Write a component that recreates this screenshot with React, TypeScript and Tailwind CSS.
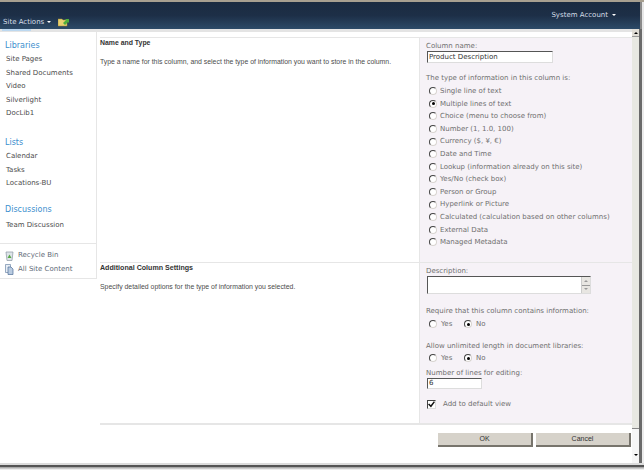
const sans = "font-['DejaVu_Sans',sans-serif]";

function Radio({ on = false }: { on?: boolean }) {
  return (
    <span className="flex h-[8px] w-[8px] shrink-0 items-center justify-center rounded-full border border-b-[#d8d4d0] border-l-[#444] border-r-[#d8d4d0] border-t-[#444] bg-white">
      {on && <span className="h-[3px] w-[3px] rounded-full bg-black" />}
    </span>
  );
}

function Opt({ label, on = false }: { label: string; on?: boolean }) {
  return (
    <div className="flex h-[12.6px] items-center gap-[3px] pl-[3px]">
      <Radio on={on} />
      <span>{label}</span>
    </div>
  );
}

function YesNo() {
  return (
    <div className="flex h-[12px] items-center pl-[3px]">
      <Radio />
      <span className="ml-[4px] w-[23px]">Yes</span>
      <Radio on />
      <span className="ml-[4px]">No</span>
    </div>
  );
}

function NavLink({ label }: { label: string }) {
  return <div className="h-[13.6px] pl-[6px] leading-[13.6px] text-[#4c4c4c]">{label}</div>;
}

function NavHead({ label }: { label: string }) {
  return <div className="pl-[5px] text-[8px] leading-[14px] text-[#3c8fce]">{label}</div>;
}

const types = [
  "Single line of text",
  "Multiple lines of text",
  "Choice (menu to choose from)",
  "Number (1, 1.0, 100)",
  "Currency ($, ¥, €)",
  "Date and Time",
  "Lookup (information already on this site)",
  "Yes/No (check box)",
  "Person or Group",
  "Hyperlink or Picture",
  "Calculated (calculation based on other columns)",
  "External Data",
  "Managed Metadata",
];

export default function App() {
  return (
    <div className={`flex h-[470px] w-[644px] flex-col overflow-hidden bg-white text-[7px] text-[#6f6f6f] ${sans}`}>
      <div className="h-[2px] bg-[#a8a090]" />
      <div className="flex h-[27px]">
        <header className="flex flex-1 items-end justify-between bg-gradient-to-b from-[#1b2b40] via-[#1d2f47] to-[#2c4a68] pb-[2px]">
          <div className="flex items-center text-[#d6dfe8]">
            <span className="ml-[3px]">Site Actions</span>
            <span className="ml-[3px] h-0 w-0 border-x-[2px] border-t-[2px] border-x-transparent border-t-white" />
            <svg className="ml-[7px]" width="11" height="10" viewBox="0 0 11 10">
              <path d="M0 2h4l1 1h4v6H0z" fill="#e8d070" stroke="#a08a30" strokeWidth="0.5" />
              <path d="M5 6l3-3-1-1h4v4l-1-1-3 3z" fill="#4fae3c" />
            </svg>
          </div>
          <div className="mb-[7px] mr-[24px] flex items-center text-[#d6dfe8]">
            <span>System Account</span>
            <span className="ml-[4px] h-0 w-0 border-x-[2px] border-t-[2px] border-x-transparent border-t-white" />
          </div>
        </header>
        <div className="w-[2px] bg-[#8a8a8a]" />
        <div className="w-[2px] bg-[#e8e8e8]" />
      </div>

      <div className="flex min-h-0 flex-1">
        <div className="flex min-w-0 flex-1 flex-col">
          <div className="h-[3px] bg-[#e4e4e4]">
            <div className="ml-[2px] h-[2px] w-[29px] bg-[#bcd8f0]" />
          </div>
          <div className="flex min-h-0 flex-1">
            <aside className="flex w-[97px] shrink-0 flex-col">
              <div className="border-r border-[#e6e6e6] pb-[11px] pt-[7px]">
                <NavHead label="Libraries" />
                <div>
                  <NavLink label="Site Pages" />
                  <NavLink label="Shared Documents" />
                  <NavLink label="Video" />
                  <NavLink label="Silverlight" />
                  <NavLink label="DocLib1" />
                </div>
                <div className="mt-[15px]"><NavHead label="Lists" /></div>
                <div>
                  <NavLink label="Calendar" />
                  <NavLink label="Tasks" />
                  <NavLink label="Locations-BU" />
                </div>
                <div className="mt-[12px]"><NavHead label="Discussions" /></div>
                <div className="mt-[2px]">
                  <NavLink label="Team Discussion" />
                </div>
              </div>
              <div className="border-b border-r border-t border-[#e6e6e6] pb-[2px] pt-[4px] text-[#5f6b78]">
                <div className="flex h-[14px] items-center gap-[4px] pl-[5px]">
                  <svg width="9" height="11" viewBox="0 0 9 11">
                    <path d="M1 2h7l-1 8.5H2z" fill="#dfe5ea" stroke="#8a97a3" strokeWidth="0.7" />
                    <path d="M4.5 4.5l2 3.5h-4z" fill="#5aa84a" />
                  </svg>
                  <span>Recycle Bin</span>
                </div>
                <div className="flex h-[14px] items-center gap-[4px] pl-[5px]">
                  <svg width="9" height="11" viewBox="0 0 9 11">
                    <path d="M0.5 0.5h5v8h-5z" fill="#e8eef5" stroke="#6f88a8" strokeWidth="0.7" />
                    <path d="M3 3h3l2 2v5.5H3z" fill="#b9cbe0" stroke="#4f6f98" strokeWidth="0.7" />
                  </svg>
                  <span>All Site Content</span>
                </div>
              </div>
            </aside>

            <main className="flex min-w-0 flex-1 flex-col pl-[3px] pt-[5px]">
              <section className="flex h-[225px] border-t border-[#e6e6e6]">
                <div className="w-[320px] shrink-0 border-r border-[#e6e6e6] font-['Liberation_Sans',sans-serif] text-[6.9px] text-[#4c4c4c]">
                  <div className="mt-[1px] font-bold leading-[8px] text-[#333]">Name and Type</div>
                  <div className="mt-[11px] leading-[8px]">Type a name for this column, and select the type of information you want to store in the column.</div>
                </div>
                <div className="flex-1 bg-[#f6f2f7] pl-[6px] pt-[3px]">
                  <div className="leading-[10px]">Column name:</div>
                  <div className="ml-[1px] flex h-[12px] w-[126px] items-center border border-b-[#ddd] border-l-[#555] border-r-[#ddd] border-t-[#555] bg-white pl-[1px] text-[#333]">
                    Product Description
                  </div>
                  <div className="mt-[11px] leading-[9px]">The type of information in this column is:</div>
                  <div className="mt-[2px]">
                    {types.map((t, i) => (
                      <Opt key={t} label={t} on={i === 1} />
                    ))}
                  </div>
                </div>
              </section>

              <section className="flex h-[161px] border-t border-[#e6e6e6]">
                <div className="w-[320px] shrink-0 border-r border-[#e6e6e6] font-['Liberation_Sans',sans-serif] text-[6.9px] text-[#4c4c4c]">
                  <div className="mt-[1px] text-[7.1px] font-bold leading-[8px] text-[#333]">Additional Column Settings</div>
                  <div className="mt-[11px] leading-[8px]">Specify detailed options for the type of information you selected.</div>
                </div>
                <div className="flex-1 bg-[#f6f2f7] pl-[6px] pt-[4px]">
                  <div className="leading-[9px]">Description:</div>
                  <div className="ml-[1px] flex h-[18px] w-[164px] justify-end border border-b-[#ddd] border-l-[#555] border-r-[#ddd] border-t-[#555] bg-white">
                    <div className="flex w-[9px] flex-col border-l border-[#ccc] bg-[#e8e6e2]">
                      <div className="flex flex-1 items-center justify-center border-b border-[#999]">
                        <span className="h-0 w-0 border-x-[2px] border-b-[2px] border-x-transparent border-b-[#999]" />
                      </div>
                      <div className="flex flex-1 items-center justify-center">
                        <span className="h-0 w-0 border-x-[2px] border-t-[2px] border-x-transparent border-t-[#999]" />
                      </div>
                    </div>
                  </div>
                  <div className="mt-[13px] leading-[9px]">Require that this column contains information:</div>
                  <div className="mt-[2px]"><YesNo /></div>
                  <div className="mt-[12px] leading-[9px]">Allow unlimited length in document libraries:</div>
                  <div className="mt-[1px]"><YesNo /></div>
                  <div className="mt-[5px] leading-[9px]">Number of lines for editing:</div>
                  <div className="ml-[1px] flex h-[11px] w-[55px] items-center border border-b-[#ddd] border-l-[#555] border-r-[#ddd] border-t-[#555] bg-white pl-[1px] text-[#333]">
                    6
                  </div>
                  <div className="mt-[10px] flex items-center gap-[7px] pl-[1px]">
                    <span className="flex h-[9px] w-[9px] items-center justify-center border border-b-[#ddd] border-l-[#444] border-r-[#ddd] border-t-[#444] bg-white">
                      <svg width="7" height="7" viewBox="0 0 6 6">
                        <path d="M0.5 2.5l2 2 3-4" fill="none" stroke="#111" strokeWidth="1.3" />
                      </svg>
                    </span>
                    <span>Add to default view</span>
                  </div>
                </div>
              </section>

              <div className="flex flex-1 justify-end gap-[3px] border-t-2 border-[#e6e6e6] pr-[1px] pt-[8px] font-['Liberation_Sans',sans-serif] text-[7px] text-[#333]">
                <button className="h-[14px] w-[95px] border-b-2 border-r-2 border-[#77746c] bg-[#d6d2ca]">OK</button>
                <button className="h-[14px] w-[95px] border-b-2 border-r-2 border-[#77746c] bg-[#d6d2ca]">Cancel</button>
              </div>
            </main>
          </div>
        </div>

        <div className="flex w-[7px] shrink-0 flex-col">
          <div className="flex h-[8px] items-center justify-center border-b border-[#999] bg-[#e0ddd6]">
            <span className="h-0 w-0 border-x-[2px] border-b-[2px] border-x-transparent border-b-black" />
          </div>
          <div className="h-[392px] border-b border-[#888] bg-[#e8e8e2]" />
          <div className="flex flex-1 items-end bg-[#f6f6f6] pb-[5px]">
            <div className="flex h-[6px] w-full items-center justify-center">
              <span className="h-0 w-0 border-x-[2px] border-t-[2px] border-x-transparent border-t-black" />
            </div>
          </div>
        </div>
        <div className="w-[3px] shrink-0 bg-[#6a6a6a]" />
        <div className="w-[2px] shrink-0 bg-[#ececec]" />
      </div>
      <div className="h-[2px] bg-[#dcdcdc]" />
      <div className="h-[2px] bg-[#555]" />
      <div className="h-[3px] bg-gradient-to-b from-[#999] to-white" />
    </div>
  );
}
